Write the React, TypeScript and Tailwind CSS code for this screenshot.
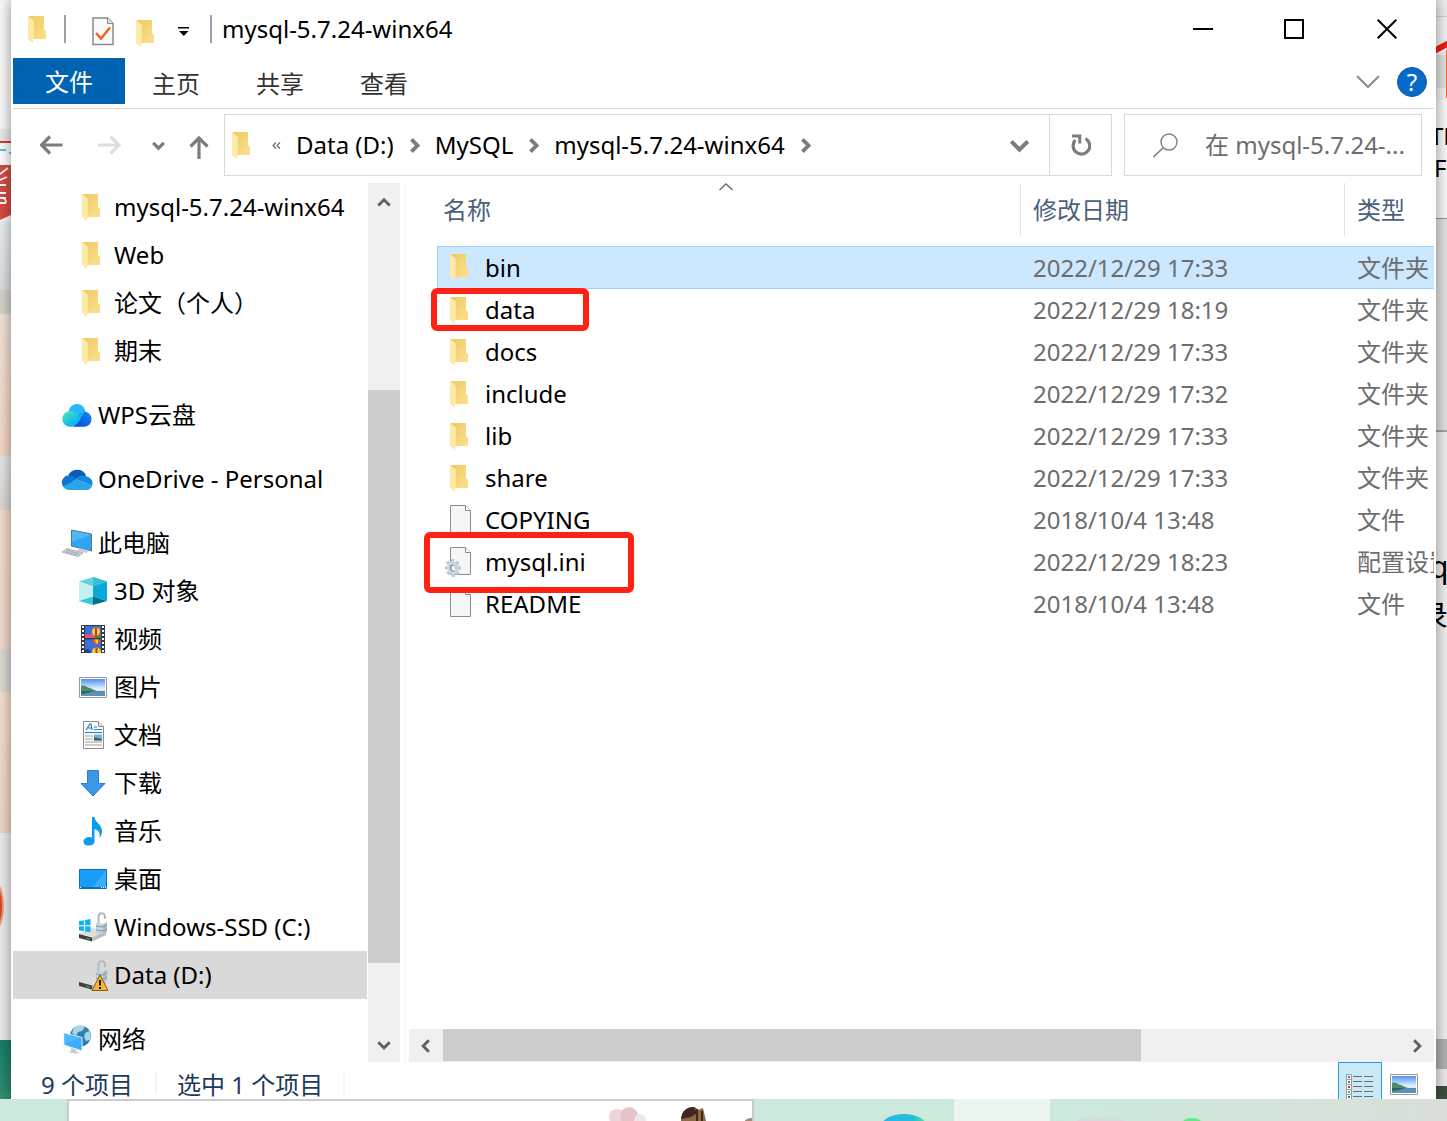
import type { ReactNode } from "react";

const FONT = "font-['Noto_Sans','Noto_Sans_CJK_SC',sans-serif]";

function FolderIcon() {
  return (
    <svg width="18" height="27" viewBox="0 0 18 27" className="shrink-0" aria-hidden="true">
      <defs>
        <linearGradient id="folderBack" x1="0" y1="0" x2="1" y2="1">
          <stop offset="0" stopColor="#ecca64" />
          <stop offset="1" stopColor="#ffe08a" />
        </linearGradient>
      </defs>
      <path d="M1 0h15v13.500l2.300 1.500v8H4z" fill="url(#folderBack)" />
      <path d="M0 0l5.800 4.500V22L5 22v5L0 23z" fill="#ffe9a6" />
    </svg>
  );
}

function FileIcon({ gear = false }: { gear?: boolean }) {
  return (
    <svg width="27" height="30" viewBox="0 0 27 30" className="shrink-0" aria-hidden="true">
      <path d="M5.500.500h15l5 5v22h-20z" fill="#f4f6f8" stroke="#8c8c8c" />
      <path d="M20.500.500v5h5" fill="#fff" stroke="#8c8c8c" />
      {gear && (
        <g transform="rotate(-12 8 21)">
          <ellipse cx="8" cy="21" rx="6.500" ry="7.800" fill="none" stroke="#b7c3cd" strokeWidth="2.500" strokeDasharray="3.200 2.300" />
          <ellipse cx="8" cy="21" rx="5.800" ry="7" fill="#ccd6de" />
          <ellipse cx="7.500" cy="21" rx="2.500" ry="3.700" fill="#8997a2" />
          <ellipse cx="8.200" cy="21.300" rx="1.600" ry="2.600" fill="#fff" />
        </g>
      )}
    </svg>
  );
}

function CheckDocIcon() {
  return (
    <svg width="22" height="29" viewBox="0 0 22 29" aria-hidden="true">
      <path d="M1 1h14.500l5.500 5.500V27.500H1z" fill="#fafafa" stroke="#8a8a8a" strokeWidth="1.500" />
      <path d="M15.500 1v5.500H21" fill="#e4e4e4" stroke="#8a8a8a" />
      <path d="M4 16l5 5.500 9-11" fill="none" stroke="#f4631e" strokeWidth="2.500" />
    </svg>
  );
}

function WpsIcon() {
  return (
    <svg width="30" height="23" viewBox="0 0 30 23" aria-hidden="true">
      <defs>
        <linearGradient id="wpsA" x1="0" y1="0" x2="1" y2="1">
          <stop offset="0" stopColor="#4bf0b0" />
          <stop offset=".6" stopColor="#12b8f2" />
          <stop offset="1" stopColor="#0aa5ff" />
        </linearGradient>
        <linearGradient id="wpsB" x1="1" y1="0" x2="0" y2="1">
          <stop offset="0" stopColor="#138bff" />
          <stop offset="1" stopColor="#0746d0" />
        </linearGradient>
      </defs>
      <circle cx="15" cy="8.500" r="8.500" fill="#27b8fb" />
      <path d="M22 7.500a7.600 7.600 0 010 15.200H11L18 10z" fill="url(#wpsB)" />
      <path d="M8 7.300c4 0 6 2 9 5.500 1.500-2 3-4.600 6-5.300-4 3.500-6 15.200-14 15.200H8a7.700 7.700 0 010-15.400z" fill="url(#wpsA)" />
    </svg>
  );
}

function OneDriveIcon() {
  return (
    <svg width="32" height="21" viewBox="0 0 32 21" aria-hidden="true">
      <path d="M7 7a10 10 0 0118-1l-5 6z" fill="#0a5cb8" />
      <path d="M8 6.500c3 0 5 1 8 3.500L3 18.500A7 7 0 018 6.500z" fill="#0d74d1" />
      <path d="M15 9.500c3-3 8-4 11-2a7 7 0 015 9.500z" fill="#1489dd" />
      <path d="M2 17.500L16 10l15 7c-1 2.500-3 4-5 4H8c-2.500 0-4.500-1.200-6-3.500z" fill="#2aa5ea" />
    </svg>
  );
}

function PcIcon() {
  return (
    <svg width="31" height="28" viewBox="0 0 31 28" aria-hidden="true">
      <path d="M9.500 1l20 4v17l-20-5z" fill="#2fa6f5" stroke="#54748c" />
      <path d="M10 1.500l19 4L10 13z" fill="#4fb5f9" />
      <path d="M17 19l6 1.500 4 1-2 2.500-10-2z" fill="#c7ced4" />
      <path d="M5 19.500l16 4.500-5 3.500L0 23z" fill="#d7dce0" stroke="#9aa4ac" strokeWidth=".8" />
      <path d="M4 21l14 4M2.500 22.500l13 3.500M8 20.500l-4 3M12 22l-4 3M16 23l-4 3" stroke="#9aa4ac" strokeWidth=".7" />
    </svg>
  );
}

function CubeIcon() {
  return (
    <svg width="28" height="28" viewBox="0 0 28 28" aria-hidden="true">
      <path d="M14 0l14 4.500-14 5-14-5z" fill="#5fd3e0" />
      <path d="M14 0l14 4.500-14 5z" fill="#35bdd3" />
      <path d="M0 4.500l14 5v10L0 24z" fill="#c5f0f2" />
      <path d="M28 4.500l-14 5v10L28 24z" fill="#0aa7dc" />
      <path d="M0 24l14-4.500V28z" fill="#33c9dc" />
      <path d="M28 24l-14-4.500V28z" fill="#04708c" />
    </svg>
  );
}

function VideoIcon() {
  return (
    <svg width="24" height="28" viewBox="0 0 24 28" aria-hidden="true">
      <path d="M0 0h24v28H0z" fill="#3b3b3b" />
      <path d="M4 1h16v12H4zM4 14.500h16V28H4z" fill="#3a6fdc" />
      <path d="M4 9l4 1 3-1 4 2 5-1v3H4z" fill="#e6528c" />
      <path d="M14 11h6v2h-6z" fill="#24923b" />
      <circle cx="15" cy="6.500" r="4" fill="#f5cf21" />
      <path d="M14 2.500h2v8h-2z" fill="#d62d20" />
      <path d="M11 14.500h9l-3 5h-3z" fill="#e9571d" />
      <path d="M14 14.500h3v4h-2z" fill="#f5cf21" />
      <path d="M11 27a4.500 4.500 0 019 0v1h-9z" fill="#f5cf21" />
      <path d="M14.500 22.500h2V28h-2z" fill="#d62d20" />
      <path d="M4 25l3-1 3 3v1H4z" fill="#243c8c" />
      <path d="M2 1v27M22 1v27" stroke="#fff" strokeWidth="2" strokeDasharray="2 2" />
    </svg>
  );
}

function PictureIcon() {
  return (
    <svg width="28" height="21" viewBox="0 0 28 21" aria-hidden="true">
      <defs>
        <linearGradient id="sky" x1="0" y1="0" x2="0" y2="1">
          <stop offset="0" stopColor="#4f8ff0" />
          <stop offset=".55" stopColor="#d9effc" />
        </linearGradient>
      </defs>
      <path d="M.500.500h27v20H.500z" fill="#fff" stroke="#989898" />
      <path d="M2 2h24v17H2z" fill="url(#sky)" />
      <path d="M2 9c3-1 5 0 7 1.500 3 .5 5 2.500 9 3.500h8v1H2z" fill="#4c8a68" />
      <path d="M2 14.500h24V19H2z" fill="#5b92bd" />
      <path d="M2 14h13l-6 2-7 1z" fill="#2d6460" />
    </svg>
  );
}

function DocumentIcon() {
  return (
    <svg width="21" height="28" viewBox="0 0 21 28" aria-hidden="true">
      <path d="M.500.500h15l5 5v22H.500z" fill="#fafafa" stroke="#8c8c8c" />
      <path d="M15.500.500v5h5" fill="#e8e8e8" stroke="#8c8c8c" />
      <path d="M3 9l4-6h1l1 6M5 7h4M11 6h3M11 8.500h8M2 11.500h17" fill="none" stroke="#1685cc" strokeWidth="1.200" />
      <path d="M2 15h8M2 18h8M2 21h17M2 24h17" stroke="#a0a0a0" />
      <path d="M11 13.500h8v6h-8z" fill="#7eaedc" />
      <path d="M11 16l4 1 4 1v1.500h-8z" fill="#3b6472" />
    </svg>
  );
}

function DownloadIcon() {
  return (
    <svg width="26" height="27" viewBox="0 0 26 27" aria-hidden="true">
      <path d="M7.500.500h11v13h6.500L13 26 1 13.500h6.500z" fill="#3d97e8" stroke="#2f7fc8" />
    </svg>
  );
}

function MusicIcon() {
  return (
    <svg width="20" height="29" viewBox="0 0 20 29" aria-hidden="true">
      <path d="M9 0h2.500c.500 6 7.500 7 7.500 14 0 3-1 5-2.500 7 1-5-1-8-5-9v12.500C11.500 27 9 28.500 5.500 28.500S.500 27 .500 24.500s3-4.500 6-4.500c1 0 2 .2 2.500.500z" fill="#0c9af2" />
    </svg>
  );
}

function DesktopIcon() {
  return (
    <svg width="28" height="20" viewBox="0 0 28 20" aria-hidden="true">
      <path d="M.500.500h27v19H.500z" fill="#189dfb" stroke="#0873bd" />
      <path d="M27 1v17H14z" fill="#3aadfd" />
      <path d="M1 18.500h26" stroke="#0873bd" />
      <path d="M1 18.500h1M22 18.500h1M24 18.500h1M26 18.500h1" stroke="#fff" />
    </svg>
  );
}

function DriveIcon({ kind }: { kind: "windows" | "warning" }) {
  return (
    <svg width="30" height="31" viewBox="0 0 30 31" aria-hidden="true">
      <path d="M1 22l13-6 14 3-13 6z" fill="#dcdcdc" />
      <path d="M1 22l13 3.500v4L1 26z" fill="#3f3f3f" />
      <path d="M14 25.500l14-6.500v4l-14 6.500z" fill="#bcbcbc" />
      <path d="M8 25.500l4 1v1.200l-4-1z" fill="#3fa648" />
      <path d="M20.500 11V5c0-5 6-5 6.500-.500V7" fill="none" stroke="#b3bbc2" strokeWidth="2" />
      <path d="M18 11l7 1 4-2v10l-4 2-7-1z" fill="#aebdc9" />
      <path d="M18 11l7 1v10l-7-1z" fill="#c6d4de" />
      <path d="M18 14l7 1 4-2M18 18l7 1 4-2" fill="none" stroke="#7b9bb3" />
      {kind === "windows" && (
        <path d="M1 9l5-.8v5H1zM7 8l5.500-1v6.200H7zM1 14.300h5v5L1 18.500zM7 14.300h5.500v6L7 19.500z" fill="#10b2f0" />
      )}
      {kind === "warning" && (
        <g>
          <path d="M22 15l8 15.500H14z" fill="#fbb430" stroke="#8a5a10" strokeLinejoin="round" />
          <path d="M22 20v5.500M22 27v2" stroke="#1a1a1a" strokeWidth="2" />
        </g>
      )}
    </svg>
  );
}

function NetworkIcon() {
  return (
    <svg width="28" height="29" viewBox="0 0 28 29" aria-hidden="true">
      <circle cx="17.500" cy="11" r="10.500" fill="#2f7fae" />
      <path d="M11 3c3-3 8-3 11-1l-3 4-4 1-2 4-4-3zM22 8l4-2c2 3 2 6 1 9l-4 1-2-4z" fill="#a9d5ea" />
      <path d="M1 8l18 4.500V26L1 20z" fill="#3aaefb" stroke="#e8f1f7" />
      <path d="M1.500 8.500l17 4.500L1.500 18z" fill="#4fb9fd" />
      <path d="M8 23l5 1.500v2l4 1c-3 1.500-8 1.200-11-.500l2-1z" fill="#c4ccd2" />
    </svg>
  );
}

function NavFolder() {
  return <span className="pr-1"><FolderIcon /></span>;
}

type NavItem = { label: string; icon: ReactNode; child?: boolean; gap?: boolean; selected?: boolean };

const navItems: NavItem[] = [
  { label: "mysql-5.7.24-winx64", icon: <NavFolder />, child: true },
  { label: "Web", icon: <NavFolder />, child: true },
  { label: "论文（个人）", icon: <NavFolder />, child: true },
  { label: "期末", icon: <NavFolder />, child: true },
  { label: "WPS云盘", icon: <WpsIcon />, gap: true },
  { label: "OneDrive - Personal", icon: <OneDriveIcon />, gap: true },
  { label: "此电脑", icon: <PcIcon />, gap: true },
  { label: "3D 对象", icon: <CubeIcon />, child: true },
  { label: "视频", icon: <VideoIcon />, child: true },
  { label: "图片", icon: <PictureIcon />, child: true },
  { label: "文档", icon: <DocumentIcon />, child: true },
  { label: "下载", icon: <DownloadIcon />, child: true },
  { label: "音乐", icon: <MusicIcon />, child: true },
  { label: "桌面", icon: <DesktopIcon />, child: true },
  { label: "Windows-SSD (C:)", icon: <DriveIcon kind="windows" />, child: true },
  { label: "Data (D:)", icon: <DriveIcon kind="warning" />, child: true, selected: true },
  { label: "网络", icon: <NetworkIcon />, gap: true },
];

type Entry = { name: string; date: string; type: string; icon: "folder" | "file" | "config"; mark?: string; selected?: boolean };

const entries: Entry[] = [
  { name: "bin", date: "2022/12/29 17:33", type: "文件夹", icon: "folder", selected: true },
  { name: "data", date: "2022/12/29 18:19", type: "文件夹", icon: "folder", mark: "-left-1.5 -top-px h-[43px] w-[158px]" },
  { name: "docs", date: "2022/12/29 17:33", type: "文件夹", icon: "folder" },
  { name: "include", date: "2022/12/29 17:32", type: "文件夹", icon: "folder" },
  { name: "lib", date: "2022/12/29 17:33", type: "文件夹", icon: "folder" },
  { name: "share", date: "2022/12/29 17:33", type: "文件夹", icon: "folder" },
  { name: "COPYING", date: "2018/10/4 13:48", type: "文件", icon: "file" },
  { name: "mysql.ini", date: "2022/12/29 18:23", type: "配置设置", icon: "config", mark: "-left-[13px] -top-[9px] h-[61px] w-[210px]" },
  { name: "README", date: "2018/10/4 13:48", type: "文件", icon: "file" },
];

function Chevron({ d, className, size = 14, weight = 2.5 }: { d: "up" | "down" | "left" | "right"; className?: string; size?: number; weight?: number }) {
  const paths = { up: "M2 10l5-5 5 5", down: "M2 4.500l5 5 5-5", left: "M9.500 2l-5 5 5 5", right: "M4.500 2l5 5-5 5" };
  return (
    <svg width={size} height={size} viewBox="0 0 14 14" className={className} aria-hidden="true">
      <path d={paths[d]} fill="none" stroke="currentColor" strokeWidth={weight} />
    </svg>
  );
}

function TitleBar() {
  return (
    <header className="flex h-[58px] shrink-0 items-center pl-[15px]">
      <FolderIcon />
      <span className="ml-[18px] h-7 w-0.5 bg-[#a0a0a0]" />
      <button type="button" aria-label="属性" className="ml-[26px] mt-1">
        <CheckDocIcon />
      </button>
      <button type="button" aria-label="新建文件夹" className="ml-[22px] mt-2">
        <FolderIcon />
      </button>
      <button type="button" aria-label="自定义快速访问工具栏" className="ml-6 mt-1">
        <svg width="12" height="9" viewBox="0 0 12 9" aria-hidden="true">
          <path d="M0 0h11v1.500H0zM1 4h9.500L5.800 9z" fill="#000" />
        </svg>
      </button>
      <span className="ml-5 h-7 w-0.5 bg-[#a0a0a0]" />
      <h1 className="ml-2.5 flex-1 text-2xl">mysql-5.7.24-winx64</h1>
      <button type="button" aria-label="最小化" className="flex h-full w-[91px] items-center justify-center">
        <svg width="20" height="20" viewBox="0 0 20 20"><path d="M0 10h20" stroke="#000" strokeWidth="2" /></svg>
      </button>
      <button type="button" aria-label="最大化" className="flex h-full w-[92px] items-center justify-center">
        <svg width="20" height="20" viewBox="0 0 20 20"><path d="M1 1h18v18H1z" fill="none" stroke="#000" strokeWidth="2" /></svg>
      </button>
      <button type="button" aria-label="关闭" className="flex h-full w-[94px] items-center justify-center">
        <svg width="20" height="20" viewBox="0 0 20 20"><path d="M.700.700l18.600 18.600M19.300.700L.700 19.300" stroke="#000" strokeWidth="2" /></svg>
      </button>
    </header>
  );
}

function RibbonTabs() {
  return (
    <nav className="flex h-[51px] shrink-0 items-start border-b border-[#dadada] text-2xl text-[#333]">
      <button type="button" className="h-[46px] w-28 bg-[#0063b1] pt-0.5 text-white">文件</button>
      {["主页", "共享", "查看"].map((tab) => (
        <button key={tab} type="button" className="h-[50px] w-[104px] pt-0.5 pr-0.5">{tab}</button>
      ))}
      <div className="ml-auto flex h-12 items-center pr-[7px]">
        <button type="button" aria-label="展开功能区" className="mr-[17px]">
          <svg width="24" height="14" viewBox="0 0 24 14"><path d="M1 1l11 11L23 1" fill="none" stroke="#8a8a8a" strokeWidth="2" /></svg>
        </button>
        <button type="button" aria-label="帮助" className="flex size-[30px] items-center justify-center rounded-full border border-[#0d5aa5] bg-[#0769c9] text-2xl leading-7 text-white">
          ?
        </button>
      </div>
    </nav>
  );
}

function AddressBar() {
  return (
    <div className="mb-0.5 flex h-[72px] shrink-0 items-center pr-3 text-[#7c7c7c]">
      <button type="button" aria-label="后退" className="ml-[27px]">
        <svg width="23" height="20" viewBox="0 0 23 20"><path d="M22.500 10H2M10 1.500L1.500 10l8.500 8.500" fill="none" stroke="#7c7c7c" strokeWidth="3.200" /></svg>
      </button>
      <button type="button" aria-label="前进" className="ml-[35px]">
        <svg width="23" height="20" viewBox="0 0 23 20"><path d="M0 10h20.500M12.500 1.500L21 10l-8.500 8.500" fill="none" stroke="#dedede" strokeWidth="3.200" /></svg>
      </button>
      <button type="button" aria-label="最近浏览的位置" className="ml-[30px]">
        <Chevron d="down" size={15} weight={3} />
      </button>
      <button type="button" aria-label="上移" className="ml-[23px] mt-1">
        <svg width="20" height="23" viewBox="0 0 20 23"><path d="M10 23V2M1.500 10.500L10 2l8.500 8.500" fill="none" stroke="#7c7c7c" strokeWidth="3.200" /></svg>
      </button>
      <div className="ml-[15px] flex h-[62px] min-w-0 flex-1 items-center border border-[#d9d9d9] pl-[7px]">
        <FolderIcon />
        <svg width="9" height="7" viewBox="0 0 9 7" className="ml-[22px]"><path d="M4 .500l-3 3 3 3M8 .500l-3 3 3 3" fill="none" stroke="#666" strokeWidth="1.200" /></svg>
        <button type="button" className="ml-[15px] text-2xl text-black">Data (D:)</button>
        <Chevron d="right" size={17} weight={3.2} className="mx-3 shrink-0" />
        <button type="button" className="text-2xl text-black">MySQL</button>
        <Chevron d="right" size={17} weight={3.2} className="mx-3 shrink-0" />
        <button type="button" className="text-2xl text-black">mysql-5.7.24-winx64</button>
        <Chevron d="right" size={17} weight={3.2} className="mx-3 shrink-0" />
        <button type="button" aria-label="以前的位置" className="ml-auto flex h-full w-[60px] items-center justify-center">
          <Chevron d="down" size={23} />
        </button>
        <button type="button" aria-label="刷新" className="flex h-full w-[62px] items-center justify-center border-l border-[#d9d9d9]">
          <svg width="20" height="22" viewBox="0 0 20 22">
            <path d="M14.500 4.600A8.300 8.300 0 1 1 4.300 6.200" fill="none" stroke="#7c7c7c" strokeWidth="3.200" />
            <path d="M1 2h7.800v7.500" fill="none" stroke="#7c7c7c" strokeWidth="3" />
          </svg>
        </button>
      </div>
      <label className="ml-3 flex h-[62px] w-[298px] items-center border border-[#d9d9d9] pl-7">
        <svg width="25" height="25" viewBox="0 0 25 25" className="shrink-0"><circle cx="16" cy="9" r="8" fill="none" stroke="#808080" strokeWidth="1.400" /><path d="M10.500 14.500L.500 24" stroke="#808080" strokeWidth="1.600" /></svg>
        <input type="text" aria-label="搜索" placeholder="在 mysql-5.7.24-..." className="ml-[27px] w-full min-w-0 text-2xl outline-none placeholder:text-[#6d6d6d]" />
      </label>
    </div>
  );
}

function NavigationPane() {
  return (
    <aside className="flex w-[393px] shrink-0 border-r-2 border-[#f7f7f7] pr-1">
      <ul className="min-w-0 flex-1 overflow-hidden">
        {navItems.map((item) => (
          <li key={item.label} className={item.gap ? "mt-4" : ""}>
            <button
              type="button"
              className={`flex h-12 w-full items-center gap-[5px] text-2xl whitespace-nowrap ${item.child ? "pl-16" : "pl-12"} ${item.selected ? "bg-[#d9d9d9]" : ""}`}
            >
              <span className="flex w-8 shrink-0 items-center justify-center">{item.icon}</span>
              {item.label}
            </button>
          </li>
        ))}
      </ul>
      <div className="ml-px flex w-8 flex-col bg-[#f0f0f0] text-[#606060]">
        <button type="button" aria-label="向上滚动" className="flex h-[34px] items-center justify-center pt-1">
          <Chevron d="up" size={16} />
        </button>
        <div className="flex-[173]" />
        <div className="flex-[573] bg-[#cdcdcd]" />
        <div className="flex-[65]" />
        <button type="button" aria-label="向下滚动" className="flex h-[34px] items-center justify-center">
          <Chevron d="down" size={16} />
        </button>
      </div>
    </aside>
  );
}

function EntryIcon({ icon }: { icon: Entry["icon"] }) {
  if (icon === "folder") return <span className="pl-[5px]"><FolderIcon /></span>;
  return <FileIcon gear={icon === "config"} />;
}

function FileList() {
  return (
    <main className="ml-[3px] flex min-w-0 flex-1 flex-col">
      <div className="min-h-0 flex-1 overflow-hidden pl-7">
        <table className="w-full table-fixed border-separate border-spacing-0 text-2xl">
          <thead>
            <tr className="h-[53px] text-left text-[#4c607a]">
              <th className="relative border-r border-[#e3e3e3] p-0 pl-1.5 font-normal">
                名称
                <svg width="14" height="8" viewBox="0 0 14 8" className="absolute top-0 left-1/2 -ml-2.5"><path d="M.500 7L7 1l6.500 6" fill="none" stroke="#666" strokeWidth="1.300" /></svg>
              </th>
              <th className="w-[324px] border-r border-[#e3e3e3] p-0 pl-3 font-normal">修改日期</th>
              <th className="w-[89px] p-0 pl-3 font-normal">类型</th>
            </tr>
          </thead>
          <tbody className="before:block before:h-2.5 before:content-['']">
            {entries.map((entry) => {
              const tone = entry.selected ? "border-y border-[#99d1ff] bg-[#cce8ff] h-[43px]" : "h-[42px]";
              return (
                <tr key={entry.name}>
                  <td className={`relative p-0 ${tone} ${entry.selected ? "border-l" : ""}`}>
                    <div className={`flex items-center ${entry.selected ? "h-[41px] pl-[7px]" : "h-[42px] pl-2"}`}>
                      <span className="flex w-10 shrink-0"><EntryIcon icon={entry.icon} /></span>
                      {entry.name}
                    </div>
                    {entry.mark && <span className={`pointer-events-none absolute z-10 rounded-md border-[6px] border-[#ff2214] ${entry.mark}`} />}
                  </td>
                  <td className={`p-0 pl-3 text-[#6d6d6d] ${tone}`}>{entry.date}</td>
                  <td className={`overflow-hidden p-0 pl-3 whitespace-nowrap text-[#6d6d6d] ${tone}`}>{entry.type}</td>
                </tr>
              );
            })}
          </tbody>
        </table>
      </div>
      <div className="flex h-[33px] shrink-0 bg-[#f0f0f0] text-[#606060]">
        <button type="button" aria-label="向左滚动" className="flex w-[34px] items-center justify-center">
          <Chevron d="left" size={16} />
        </button>
        <div className="mb-px flex-[698] bg-[#cdcdcd]" />
        <div className="flex-[259]" />
        <button type="button" aria-label="向右滚动" className="flex w-[34px] items-center justify-center">
          <Chevron d="right" size={16} />
        </button>
      </div>
    </main>
  );
}

function StatusBar() {
  return (
    <footer className="flex h-[37px] shrink-0 overflow-hidden pl-7 text-2xl text-[#1e395b]">
      <span className="pt-[9px] pr-[22px] leading-7">9 个项目</span>
      <span className="mt-2.5 h-[22px] w-0.5 bg-[#f5f5f5]" />
      <span className="px-5 pt-[9px] leading-7">选中 1 个项目</span>
      <span className="mt-2.5 h-[22px] w-0.5 bg-[#f5f5f5]" />
      <button type="button" aria-label="详细信息" className="ml-auto flex h-12 w-11 justify-center border border-[#26a0da] bg-[#cbe8f6] pt-[11px]">
        <svg width="28" height="30" viewBox="0 0 28 30" aria-hidden="true">
          {["#2f72c4", "#4b8d62", "#d1281f", "#72a84e", "#2f72c4"].map((fill, i) => (
            <g key={i} transform={`translate(0 ${i * 5})`}>
              <path d="M.500.500h5v5h-5z" fill="#fff" stroke="#9a9a9a" />
              <path d="M2 2h2v2H2z" fill={fill} />
              <path d="M7 2.500h9M18 2.500h9" stroke="#6c6c6c" />
            </g>
          ))}
        </svg>
      </button>
      <button type="button" aria-label="大图标" className="mr-2 flex h-11 w-11 items-center pl-2">
        <PictureIcon />
      </button>
    </footer>
  );
}

function LeftBackdrop() {
  return (
    <div className="flex w-[11px] shrink-0 flex-col overflow-hidden bg-[#f8f8f8]" aria-hidden="true">
      <div className="flex-[129] bg-[#fafafa]" />
      <div className="flex-[12] bg-[#ececee]" />
      <div className="h-0.5 bg-[#dd3b33]" />
      <svg className="h-[22px] w-full bg-white" viewBox="0 0 11 22"><path d="M0 7h6M9 10h2" stroke="#2ab3c9" strokeWidth="1.500" /></svg>
      <svg className="h-[56px] w-full bg-white" viewBox="0 0 11 56">
        <path d="M0 0h11v50L0 55z" fill="#d64c44" />
        <path d="M0 9l8-6M0 15l7-3M0 20h6M0 28h6M0 33h6M0 38h5c2 0 1-6-5-5" fill="none" stroke="#fff" strokeWidth="1.800" />
      </svg>
      <div className="flex-[69] bg-linear-to-b from-[#eef1f4] to-[#dcdfe3]" />
      <div className="flex-[24] bg-[#d8d3cc]" />
      <div className="flex-[142] bg-linear-to-b from-[#f3e5da] to-[#f6d9c5]" />
      <div className="flex-[54] bg-linear-to-b from-[#e9e9ea] to-[#ddd8d2]" />
      <div className="flex-[140] bg-linear-to-b from-[#f6dfce] to-[#f1dccd]" />
      <div className="flex-[42] bg-[#dedad5]" />
      <div className="flex-[141] bg-linear-to-b from-[#f6e1d1] to-[#f0d8c7]" />
      <div className="flex-[37] bg-[#eeeeef]" />
      <svg className="h-[72px] w-full" viewBox="0 0 11 72"><path d="M0 0h11v72H0z" fill="#eeeeef" /><ellipse cx="-5" cy="36" rx="8" ry="23" fill="#d9432a" stroke="#f0a070" strokeWidth="2" /></svg>
      <div className="flex-[98] bg-[#eeeef0]" />
      <div className="flex-[59] bg-linear-to-b from-[#16806a] to-[#2f9073]" />
    </div>
  );
}

function RightBackdrop() {
  return (
    <div className="flex w-[11px] shrink-0 flex-col overflow-hidden bg-[#f3f3f3] text-black" aria-hidden="true">
      <div className="h-4 bg-[#ededed]" />
      <svg className="h-[84px] w-full" viewBox="0 0 11 84">
        <path d="M0 0h11v84H0z" fill="#f2f2f2" />
        <path d="M0 .500h11" stroke="#cfcfcf" />
        <path d="M0 39h11v33H0z" fill="#e2e2e2" />
        <path d="M-2 35l15-8" stroke="#f01d14" strokeWidth="6" />
        <path d="M10.500 34v48" stroke="#ff6a10" />
      </svg>
      <div className="flex h-[119px] flex-col overflow-hidden border-b border-[#9a9a9a] bg-[#fafafa] pt-5 text-2xl leading-8">
        <span className="-ml-1.5">TH</span>
        <span className="-ml-0.5">F</span>
      </div>
      <div className="flex-[211] bg-[#e2e2e2]" />
      <div className="h-0.5 bg-[#9fa8a8]" />
      <div className="flex-[111] bg-[#f1f1f1]" />
      <div className="h-[90px] bg-[#f1f1f1] text-3xl leading-[48px] whitespace-nowrap">
        <div className="-ml-1.5">q</div>
        <div className="-ml-[18px]">录</div>
      </div>
      <div className="flex-[406] bg-[#f1f1f1]" />
      <div className="h-[30px] bg-[#b1b1b1]" />
      <div className="h-[17px] bg-[#ececec]" />
      <div className="h-[13px] bg-[#3c4f3d]" />
    </div>
  );
}

function Taskbar() {
  return (
    <div className="flex h-[22px] bg-linear-to-r from-[#cbeadd] from-70% to-[#d9dfd8]" aria-hidden="true">
      <div className="w-[67px] shrink-0" />
      <div className="flex w-[687px] shrink-0 items-end justify-end overflow-hidden border-2 border-b-0 border-[#cbcbcb] bg-white">
        <svg width="143" height="14" viewBox="0 0 143 14">
          <circle cx="8" cy="10" r="8" fill="#ecd5da" />
          <circle cx="20" cy="9" r="9" fill="#e6c3c5" />
          <circle cx="31" cy="13" r="6" fill="#f3e4ea" />
          <path d="M72 14c0-9 6-14 14-14l3 3 5-2 3 13z" fill="#8d6a45" />
          <path d="M72 12C73 3 78 0 85 0l3 6-6 4z" fill="#3f2623" />
          <path d="M88 2v12M93 4v10" stroke="#3a2d18" strokeWidth="2" />
          <circle cx="142" cy="19" r="8" fill="#ab876b" />
        </svg>
      </div>
      <div className="flex w-[200px] shrink-0 items-end justify-end pr-7">
        <svg width="44" height="7" viewBox="0 0 44 7">
          <defs><linearGradient id="edge"><stop offset="0" stopColor="#28b4f5" /><stop offset=".7" stopColor="#23bfd3" /><stop offset="1" stopColor="#59df9b" /></linearGradient></defs>
          <ellipse cx="22" cy="13" rx="23" ry="13" fill="url(#edge)" />
        </svg>
      </div>
      <div className="w-24 shrink-0 bg-[#ebf6f1]" />
      <div className="flex flex-1 items-end pl-[27px]">
        <div className="h-0.5 w-[47px] bg-[#d9d9de]" />
        <svg width="18" height="3" viewBox="0 0 18 3" className="ml-[59px]"><ellipse cx="9" cy="4" rx="9" ry="4" fill="#5feb83" /></svg>
      </div>
    </div>
  );
}

export default function App() {
  return (
    <div className={`flex h-screen flex-col overflow-hidden text-black ${FONT}`}>
      <div className="flex min-h-0 flex-1">
        <LeftBackdrop />
        <div className="z-10 flex min-w-0 flex-1 flex-col bg-white px-0.5 shadow-[0_0_14px_rgba(0,0,0,0.45)]">
          <TitleBar />
          <RibbonTabs />
          <AddressBar />
          <div className="flex min-h-0 flex-1">
            <NavigationPane />
            <FileList />
          </div>
          <StatusBar />
        </div>
        <RightBackdrop />
      </div>
      <div className="z-20 shrink-0"><Taskbar /></div>
    </div>
  );
}
